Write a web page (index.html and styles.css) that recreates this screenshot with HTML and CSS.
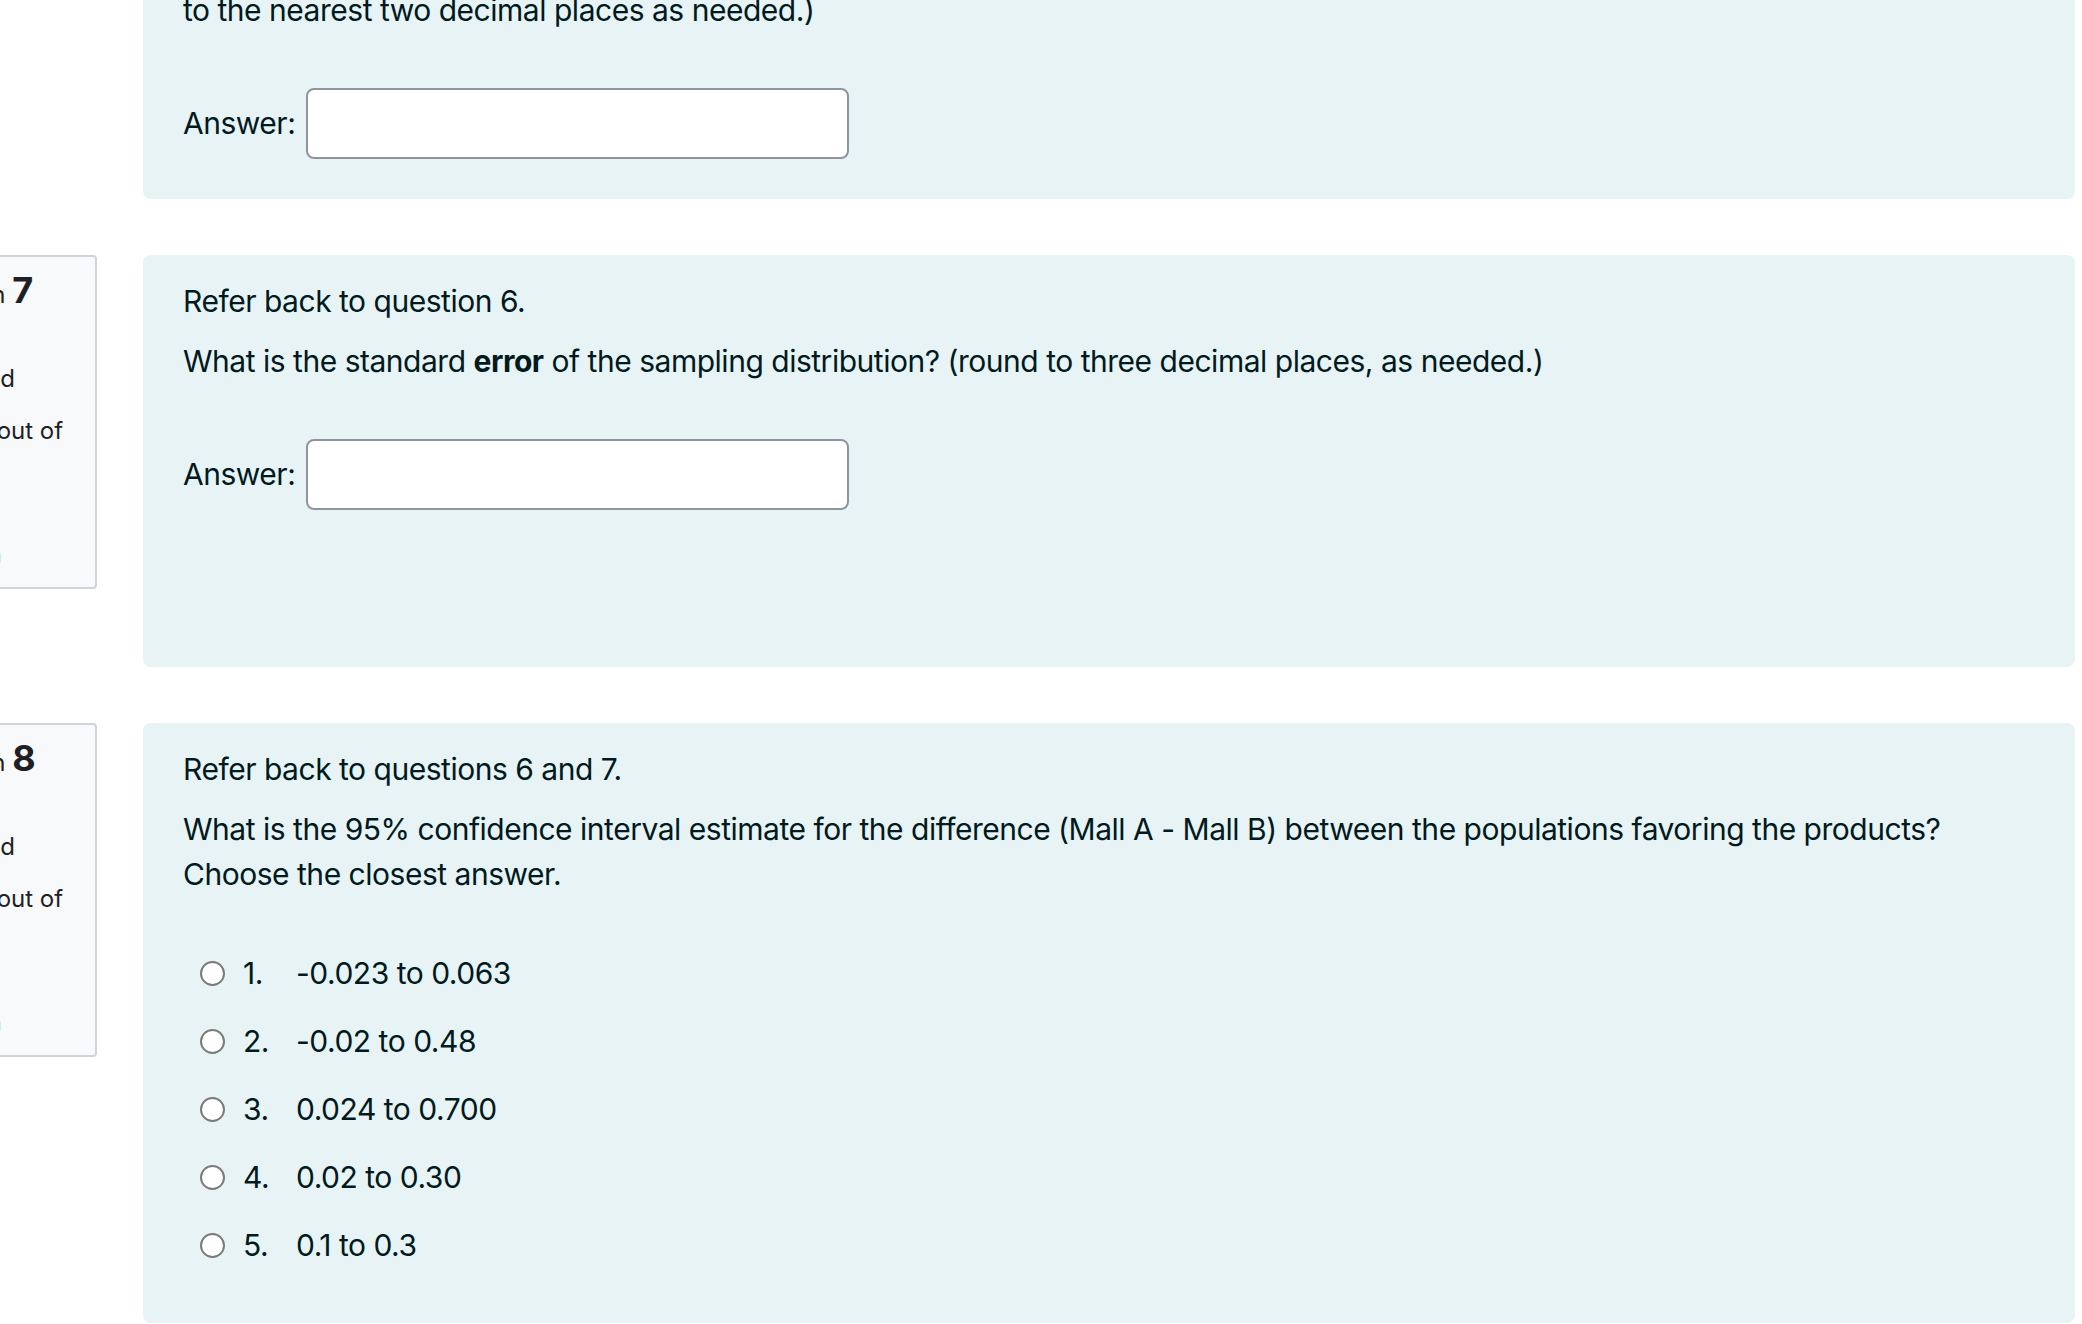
FILE: index.html
```html
<!DOCTYPE html>
<html lang="en">
<head>
<meta charset="utf-8">
<title>Quiz</title>
<link rel="stylesheet" href="styles.css">
</head>
<body>
<div class="page">

  <div class="que">
    <div class="info info-empty"></div>
    <div class="formulation">
      <div class="qtext">
        <p>to the nearest two decimal places as needed.)</p>
      </div>
      <div class="ablock">
        <label class="alabel" for="a6">Answer:</label>
        <input class="answer-input" id="a6" type="text">
      </div>
    </div>
  </div>

  <div class="que">
    <div class="info">
      <h3 class="no">Question <span class="qno">7</span></h3>
      <div class="state">Not yet answered</div>
      <div class="grade">Marked out of 1.00</div>
      <div class="flag"><a href="#"><span class="flagicon"></span>Flag question</a></div>
    </div>
    <div class="formulation">
      <div class="qtext">
        <p>Refer back to question 6.</p>
        <p>What is the standard <strong>error</strong> of the sampling distribution? (round to three decimal places, as needed.)</p>
      </div>
      <div class="ablock">
        <label class="alabel" for="a7">Answer:</label>
        <input class="answer-input" id="a7" type="text">
      </div>
      <div class="validation"></div>
    </div>
  </div>

  <div class="que">
    <div class="info">
      <h3 class="no">Question <span class="qno">8</span></h3>
      <div class="state">Not yet answered</div>
      <div class="grade">Marked out of 1.00</div>
      <div class="flag"><a href="#"><span class="flagicon"></span>Flag question</a></div>
    </div>
    <div class="formulation">
      <div class="qtext">
        <p>Refer back to questions 6 and 7.</p>
        <p>What is the 95% confidence interval estimate for the difference (Mall A - Mall B) between the populations favoring the products? Choose the closest answer.</p>
      </div>
      <div class="choices">
        <label class="choice"><input type="radio" name="q8" class="radio"><span class="anum">1.</span><span class="atext">-0.023 to 0.063</span></label>
        <label class="choice"><input type="radio" name="q8" class="radio"><span class="anum">2.</span><span class="atext">-0.02 to 0.48</span></label>
        <label class="choice"><input type="radio" name="q8" class="radio"><span class="anum">3.</span><span class="atext">0.024 to 0.700</span></label>
        <label class="choice"><input type="radio" name="q8" class="radio"><span class="anum">4.</span><span class="atext">0.02 to 0.30</span></label>
        <label class="choice"><input type="radio" name="q8" class="radio"><span class="anum">5.</span><span class="atext">0.1 to 0.3</span></label>
      </div>
    </div>
  </div>

</div>
</body>
</html>
```

FILE: styles.css
```css
html, body {
  margin: 0;
  padding: 0;
  background: #ffffff;
  overflow: hidden;
}

body {
  font-family: Inter, "Noto Sans", "Liberation Sans", sans-serif;
  color: #1d2125;
  width: 2082px;
  height: 1324px;
}

.page {
  margin-top: -36px;
  padding-right: 7px;
}

.que {
  display: flex;
  align-items: flex-start;
  gap: 46px;
  margin-bottom: 56px;
}

.info {
  flex: 0 0 auto;
  box-sizing: border-box;
  width: 210px;
  margin-left: -113px;
  padding: 15px 15px 14px 15px;
  background: #f8f9fa;
  border: 2px solid #cfd4da;
  border-radius: 4px;
  font-size: 24px;
  line-height: 36px;
  color: #1d2125;
}

.info-empty {
  visibility: hidden;
  height: 10px;
  padding: 0;
  border: 0;
}

.no {
  margin: 0;
  font-size: 24px;
  font-weight: normal;
  line-height: 36px;
}

.qno {
  font-size: 36px;
  font-weight: 700;
  line-height: 36px;
}

.state {
  margin-top: 12px;
}

.grade, .flag {
  margin-top: 16px;
}

.flag a {
  color: #0f6cbf;
  text-decoration: none;
}

.flagicon {
  display: inline-block;
  width: 28px;
  height: 20px;
  margin-right: 6px;
}

.formulation {
  flex: 1 1 auto;
  min-width: 0;
  box-sizing: border-box;
  background: #e7f3f5;
  color: #001a1e;
  border-radius: 8px;
  padding: 24px 40px;
  font-size: 30px;
  line-height: 45px;
  letter-spacing: -0.48px;
}

.qtext p {
  margin: 0 0 15px 0;
}

.qtext p:last-child {
  margin-bottom: 0;
}

.qtext strong {
  font-weight: 700;
}

.ablock {
  display: flex;
  align-items: center;
  gap: 11px;
  margin-top: 55px;
  margin-bottom: 16px;
}

.answer-input {
  box-sizing: border-box;
  width: 543px;
  height: 71px;
  margin: 0;
  background: #ffffff;
  border: 2px solid #8f959e;
  border-radius: 8px;
  font-family: inherit;
  font-size: 30px;
  padding: 0 24px;
}

.validation {
  height: 117px;
}

.choices {
  display: flex;
  flex-direction: column;
  margin-top: 42px;
  margin-bottom: 20px;
}

.choice {
  display: flex;
  align-items: center;
  height: 68px;
}

.radio {
  -webkit-appearance: none;
  appearance: none;
  box-sizing: border-box;
  width: 25px;
  height: 25px;
  margin: 0 0 0 17px;
  border: 2px solid #7a7a7a;
  border-radius: 50%;
  background: #ffffff;
}

.anum {
  display: inline-block;
  width: 53px;
  margin-left: 18px;
}
```
